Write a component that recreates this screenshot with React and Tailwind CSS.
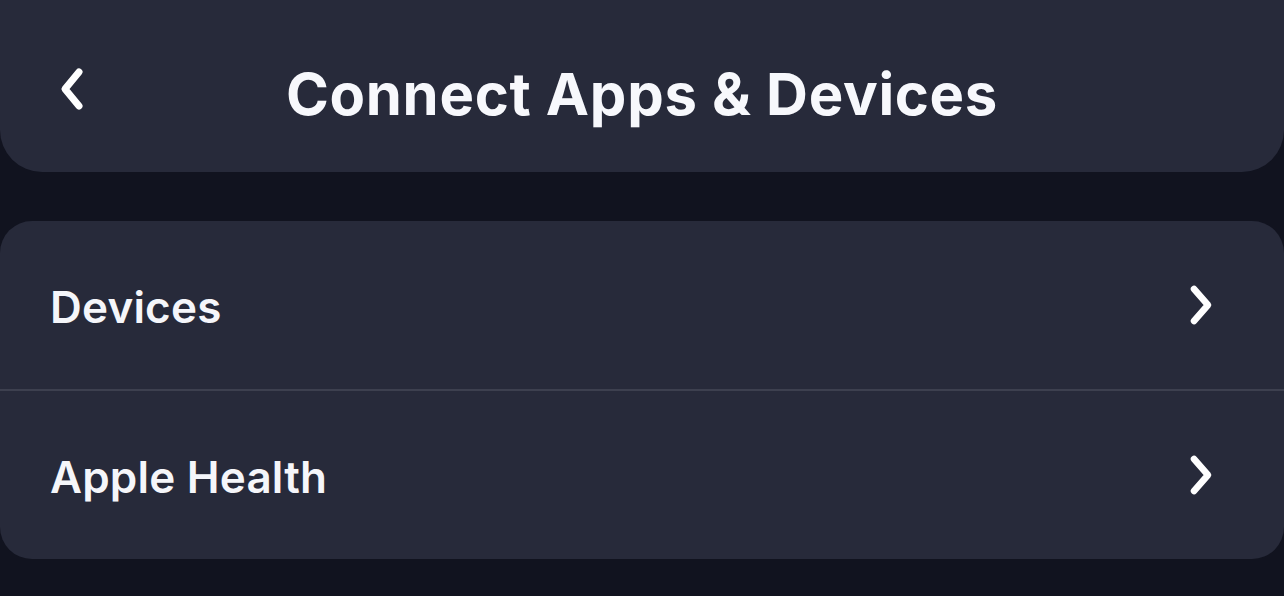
const ChevronLeft = () => (
  <svg width="32" height="44" viewBox="0 0 32 44" fill="none">
    <path
      d="M24 5 L10 22 L24 39"
      stroke="white"
      strokeWidth="7"
      strokeLinecap="round"
      strokeLinejoin="round"
    />
  </svg>
);

const ChevronRight = () => (
  <svg width="28" height="42" viewBox="0 0 28 42" fill="none">
    <path
      d="M7 5 L21 21 L7 37"
      stroke="white"
      strokeWidth="6.5"
      strokeLinecap="round"
      strokeLinejoin="round"
    />
  </svg>
);

const Row = ({ label }) => (
  <div className="h-[168px] flex items-center justify-between pl-[50px] pr-[69px]">
    <span className="text-[44px] font-semibold text-[#f5f6fa] tracking-[0.2px] mt-[4px]">
      {label}
    </span>
    <ChevronRight />
  </div>
);

export default function App() {
  return (
    <div
      className="w-[1284px] h-[596px] bg-[#11131f] overflow-hidden"
      style={{ fontFamily: "Inter, 'Noto Sans', sans-serif" }}
    >
      {/* Header */}
      <div className="h-[172px] bg-[#272a3a] rounded-b-[42px] relative flex items-center justify-center">
        <div className="absolute left-[55px] top-[67px]">
          <ChevronLeft />
        </div>
        <h1 className="text-[58px] font-bold text-[#f7f8fc] tracking-[0.7px] mt-[16px]">
          Connect Apps &amp; Devices
        </h1>
      </div>

      {/* List */}
      <div className="mt-[49px] bg-[#272a3a] rounded-[32px] overflow-hidden">
        <Row label="Devices" />
        <div className="h-[2px] bg-[#3d404f]" />
        <Row label="Apple Health" />
      </div>
    </div>
  );
}
